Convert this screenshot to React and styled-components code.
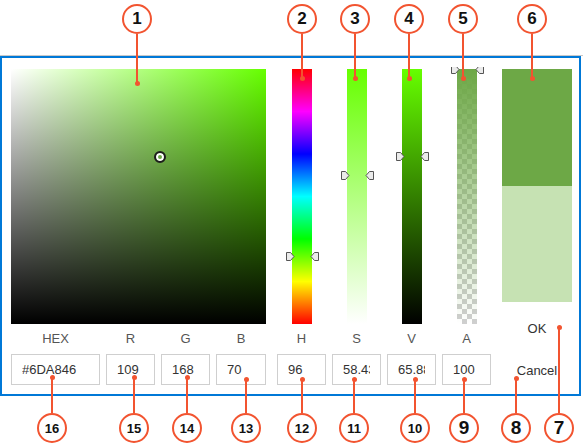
import React from "react"
import styled, { createGlobalStyle } from "styled-components"

const GlobalStyle = createGlobalStyle`
  body {
    margin: 0;
    background: #fff;
    font-family: "Liberation Sans", Arial, sans-serif;
  }
`

const HUE = "#66ff00"
const COLOR = "#6da846"

const S = {
  Page: styled.div`
    position: relative;
    width: 583px;
    height: 444px;
    overflow: hidden;
  `,
  Rule: styled.div`
    margin-top: 55px;
    border-top: 1px solid #c9c9c9;
  `,
  Frame: styled.div`
    display: flex;
    width: 581px;
    box-sizing: border-box;
    border: 2px solid #0078d7;
    padding: 11px 7px 9px 9px;
  `,
  MainColumn: styled.div`
    display: flex;
    flex-direction: column;
    width: 255px;
  `,
  SVArea: styled.div`
    position: relative;
    height: 255px;
    background: linear-gradient(to top, #000, rgba(0, 0, 0, 0)),
      linear-gradient(to right, #fff, ${HUE});
  `,
  Cursor: styled.div`
    position: absolute;
    left: ${(p) => p.$x}px;
    top: ${(p) => p.$y}px;
    width: 12px;
    height: 12px;
    margin: -6px 0 0 -6px;
    box-sizing: border-box;
    border: 2px solid #1c1c1c;
    border-radius: 50%;
    box-shadow: inset 0 0 0 2px #fff;
  `,
  FieldRow: styled.div`
    display: grid;
    grid-template-columns: 89px 49px 49px 50px;
    column-gap: 6px;
  `,
  Field: styled.div`
    display: flex;
    flex-direction: column;
  `,
  Label: styled.div`
    height: 30px;
    line-height: 30px;
    text-align: center;
    font-size: 13px;
    color: #555;
  `,
  Input: styled.input`
    width: 100%;
    height: 31px;
    box-sizing: border-box;
    border: 1px solid #cfcfcf;
    padding: 0 10px;
    font-family: inherit;
    font-size: 13px;
    color: #333;
    background: #fff;
    outline: none;
  `,
  Sliders: styled.div`
    display: flex;
    gap: 6px;
    margin-left: 11px;
  `,
  SliderColumn: styled.div`
    display: flex;
    flex-direction: column;
    width: 49px;
  `,
  TrackArea: styled.div`
    display: flex;
    justify-content: center;
    height: 257px;
    margin-top: -2px;
    padding-top: 2px;
    box-sizing: border-box;
    overflow: hidden;
  `,
  Track: styled.div`
    position: relative;
    width: 20px;
    height: 255px;
    background: ${(p) => p.$bg};
  `,
  Handle: styled.svg`
    position: absolute;
    top: ${(p) => p.$y - 4.5}px;
    ${(p) => (p.$side === "left" ? "left: -6px;" : "right: -7px;")}
    width: 9px;
    height: 9px;
    overflow: visible;
  `,
  PreviewColumn: styled.div`
    display: flex;
    flex-direction: column;
    width: 70px;
    margin-left: 11px;
  `,
  Preview: styled.div`
    display: flex;
    flex-direction: column;
    height: 233px;
  `,
  Swatch: styled.div`
    flex: 1;
    background: ${(p) => p.$color};
  `,
  Buttons: styled.div`
    display: flex;
    flex-direction: column;
    gap: 12px;
    margin-top: 11px;
  `,
  Button: styled.button`
    height: 30px;
    padding: 0;
    border: none;
    background: transparent;
    font-family: inherit;
    font-size: 13px;
    color: #333;
    cursor: pointer;
  `,
  Marker: styled.div`
    position: absolute;
    left: ${(p) => p.$x - 15}px;
    top: ${(p) => p.$y - 15}px;
    width: 30px;
    height: 30px;
    box-sizing: border-box;
    border: 2px solid #f25430;
    border-radius: 50%;
    background: #fff;
    display: flex;
    align-items: center;
    justify-content: center;
    font-weight: bold;
    font-size: ${(p) => p.$size}px;
    color: #111;
    z-index: 3;
  `,
  Leader: styled.div`
    position: absolute;
    left: ${(p) => p.$x - 1}px;
    top: ${(p) => p.$top}px;
    width: 2px;
    height: ${(p) => p.$h}px;
    background: #f25430;
    z-index: 2;
  `,
  Dot: styled.div`
    position: absolute;
    left: ${(p) => p.$x - 2.5}px;
    top: ${(p) => p.$y - 2.5}px;
    width: 5px;
    height: 5px;
    border-radius: 50%;
    background: #f25430;
    z-index: 2;
  `,
}

const checker =
  "repeating-conic-gradient(#cfcfcf 0 25%, #fff 0 50%) 0 0 / 10px 10px"

const sliders = [
  {
    label: "H",
    value: "96",
    handle: 255 - (96 / 360) * 255,
    bg: `linear-gradient(to bottom, #f00 0%, #f0f 16.67%, #00f 33.33%, #0ff 50%, #0f0 66.67%, #ff0 83.33%, #f00 100%)`,
  },
  {
    label: "S",
    value: "58.43",
    handle: 255 * (1 - 0.5843),
    bg: `linear-gradient(to bottom, ${HUE}, #fff)`,
  },
  {
    label: "V",
    value: "65.88",
    handle: 255 * (1 - 0.6588),
    bg: `linear-gradient(to bottom, ${HUE}, #000)`,
  },
  {
    label: "A",
    value: "100",
    handle: 0,
    bg: `linear-gradient(to bottom, ${COLOR}, rgba(109, 168, 70, 0)), ${checker}`,
  },
]

const fields = [
  { label: "HEX", value: "#6DA846" },
  { label: "R", value: "109" },
  { label: "G", value: "168" },
  { label: "B", value: "70" },
]

// callouts: x, circle centre y, dot y
const callouts = [
  { n: 1, x: 137, cy: 19, dot: 83 },
  { n: 2, x: 302, cy: 19, dot: 78 },
  { n: 3, x: 355, cy: 19, dot: 78 },
  { n: 4, x: 409, cy: 19, dot: 78 },
  { n: 5, x: 463, cy: 19, dot: 78 },
  { n: 6, x: 532, cy: 19, dot: 78 },
  { n: 7, x: 559, cy: 428, dot: 327 },
  { n: 8, x: 516, cy: 428, dot: 378 },
  { n: 9, x: 464, cy: 428, dot: 379 },
  { n: 10, x: 415, cy: 428, dot: 379 },
  { n: 11, x: 354, cy: 428, dot: 379 },
  { n: 12, x: 302, cy: 428, dot: 379 },
  { n: 13, x: 246, cy: 428, dot: 379 },
  { n: 14, x: 187, cy: 428, dot: 377 },
  { n: 15, x: 134, cy: 428, dot: 377 },
  { n: 16, x: 52, cy: 428, dot: 377 },
]

const Handle = ({ y, side }) => (
  <S.Handle $y={y} $side={side} viewBox="0 0 9 9">
    <path
      d={
        side === "left"
          ? "M0.5 0.5 H4.5 L8 4.5 L4.5 8.5 H0.5 Z"
          : "M8.5 0.5 H4.5 L1 4.5 L4.5 8.5 H8.5 Z"
      }
      fill="#ebebeb"
      stroke="#555"
      strokeWidth="1"
    />
  </S.Handle>
)

const Callout = ({ n, x, cy, dot }) => {
  const below = dot > cy
  const top = below ? cy + 15 : dot
  const h = below ? dot - cy - 15 : cy - 15 - dot
  const size = n > 9 ? 13 : cy < 100 ? 17 : 19
  return (
    <>
      <S.Leader $x={x} $top={top} $h={h} />
      <S.Dot $x={x} $y={dot} />
      <S.Marker $x={x} $y={cy} $size={size}>
        {n}
      </S.Marker>
    </>
  )
}

export default function App() {
  return (
    <S.Page>
      <GlobalStyle />
      <S.Rule>
        <S.Frame>
          <S.MainColumn>
            <S.SVArea>
              <S.Cursor $x={149} $y={88} />
            </S.SVArea>
            <S.FieldRow>
              {fields.map((f) => (
                <S.Field key={f.label}>
                  <S.Label>{f.label}</S.Label>
                  <S.Input defaultValue={f.value} />
                </S.Field>
              ))}
            </S.FieldRow>
          </S.MainColumn>

          <S.Sliders>
            {sliders.map((s) => (
              <S.SliderColumn key={s.label}>
                <S.TrackArea>
                  <S.Track $bg={s.bg}>
                    <Handle y={s.handle} side="left" />
                    <Handle y={s.handle} side="right" />
                  </S.Track>
                </S.TrackArea>
                <S.Label>{s.label}</S.Label>
                <S.Input defaultValue={s.value} />
              </S.SliderColumn>
            ))}
          </S.Sliders>

          <S.PreviewColumn>
            <S.Preview>
              <S.Swatch $color={COLOR} />
              <S.Swatch $color="#c6e2b3" />
            </S.Preview>
            <S.Buttons>
              <S.Button>OK</S.Button>
              <S.Button>Cancel</S.Button>
            </S.Buttons>
          </S.PreviewColumn>
        </S.Frame>
      </S.Rule>

      {callouts.map((c) => (
        <Callout key={c.n} {...c} />
      ))}
    </S.Page>
  )
}
